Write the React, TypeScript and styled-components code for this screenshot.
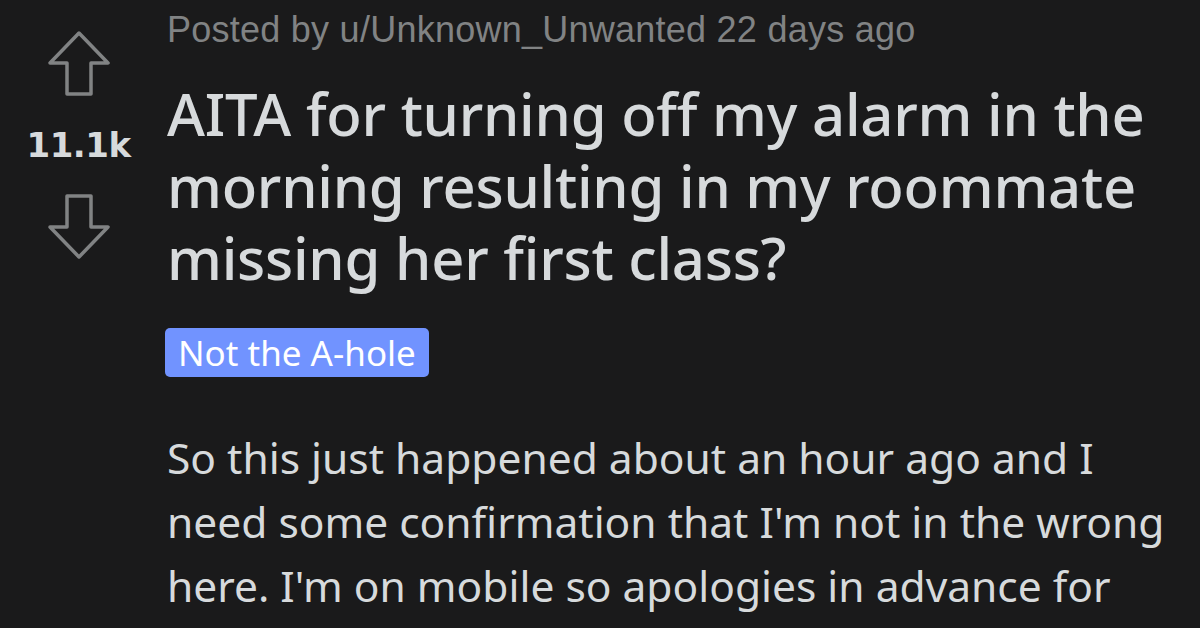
import React from "react";
import styled, { createGlobalStyle } from "styled-components";

const GlobalStyle = createGlobalStyle`
  html, body {
    margin: 0;
    padding: 0;
    background: #1a1a1b;
  }
  body {
    width: 1200px;
    height: 628px;
    overflow: hidden;
  }
`;

const Post = styled.div`
  display: flex;
  width: 1200px;
  height: 628px;
  background: #1a1a1b;
  overflow: hidden;
`;

const VoteColumn = styled.div`
  width: 157px;
  flex-shrink: 0;
  display: flex;
  flex-direction: column;
  align-items: center;
  padding-top: 31px;
`;

const VoteCount = styled.div`
  font-family: "DejaVu Sans", sans-serif;
  font-weight: 700;
  font-size: 34px;
  line-height: 40px;
  color: #d7dadc;
  margin: 28px 0 28px;
  letter-spacing: -0.5px;
`;

const Content = styled.div`
  flex: 1;
  padding-left: 10px;
  padding-right: 23px;
`;

const Meta = styled.div`
  font-family: "Liberation Sans", sans-serif;
  font-size: 36px;
  line-height: 40px;
  letter-spacing: 0.25px;
  color: #818384;
  margin-top: 10px;
`;

const Title = styled.h1`
  margin: 28px 0 0;
  font-family: "Noto Sans", sans-serif;
  font-weight: 500;
  font-size: 58px;
  line-height: 72px;
  letter-spacing: -0.25px;
  color: #d7dadc;
`;

const Flair = styled.span`
  display: block;
  width: fit-content;
  margin: 34px 0 0 -2px;
  padding: 0 13px;
  height: 49px;
  line-height: 49px;
  border-radius: 5px;
  background: #7193ff;
  color: #ffffff;
  font-family: "Noto Sans", sans-serif;
  font-size: 35px;
`;

const Body = styled.p`
  margin: 49px 0 0;
  font-family: "Noto Sans", sans-serif;
  font-size: 42.5px;
  line-height: 64px;
  color: #d7dadc;
`;

const Arrow: React.FC<{ down?: boolean }> = ({ down }) => (
  <svg
    width="64"
    height="66"
    viewBox="0 0 64 66"
    style={down ? { transform: "scaleY(-1)" } : undefined}
  >
    <path
      d="M32 2 L61 32 H44 V63 H20 V32 H3 Z"
      fill="none"
      stroke="#818384"
      strokeWidth="3.5"
      strokeLinejoin="round"
    />
  </svg>
);

export default function App() {
  return (
    <>
      <GlobalStyle />
      <Post>
        <VoteColumn>
          <Arrow />
          <VoteCount>11.1k</VoteCount>
          <Arrow down />
        </VoteColumn>
        <Content>
          <Meta>Posted by u/Unknown_Unwanted 22 days ago</Meta>
          <Title>
            AITA for turning off my alarm in the morning resulting in my
            roommate missing her first class?
          </Title>
          <Flair>Not the A-hole</Flair>
          <Body>
            So this just happened about an hour ago and I need some
            confirmation that I'm not in the wrong here. I'm on mobile so
            apologies in advance for
          </Body>
        </Content>
      </Post>
    </>
  );
}
